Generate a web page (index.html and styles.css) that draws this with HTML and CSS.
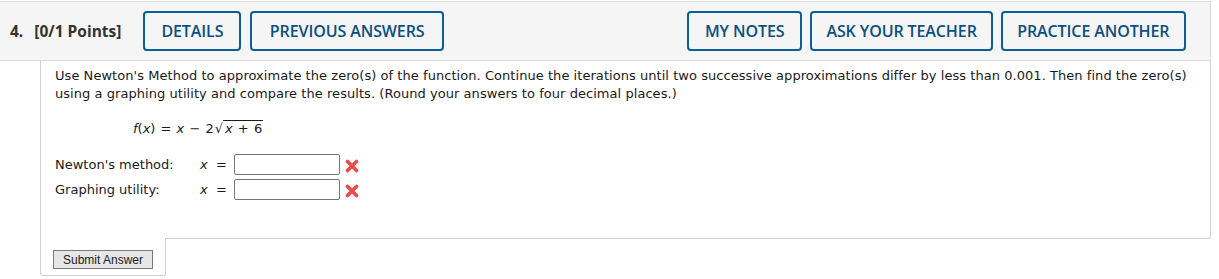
FILE: index.html
```html
<!DOCTYPE html>
<html>
<head>
<meta charset="utf-8">
<link rel="stylesheet" href="styles.css">
</head>
<body>
<div class="page">
  <div class="header">
    <div class="qnum"><span class="num">4.</span><span class="pts">[0/1 Points]</span></div>
    <div class="btns btns-left">
      <button class="hbtn btn-details">DETAILS</button>
      <button class="hbtn btn-prev">PREVIOUS ANSWERS</button>
    </div>
    <div class="spacer"></div>
    <div class="btns btns-right">
      <button class="hbtn btn-notes">MY NOTES</button>
      <button class="hbtn btn-ask">ASK YOUR TEACHER</button>
      <button class="hbtn btn-practice">PRACTICE ANOTHER</button>
    </div>
  </div>
  <div class="content">
    <p class="prompt">Use Newton's Method to approximate the zero(s) of the function. Continue the iterations until two successive approximations differ by less than 0.001. Then find the zero(s) using a graphing utility and compare the results. (Round your answers to four decimal places.)</p>
    <div class="formula"><i>f</i>(<i>x</i>) = <i>x</i> − 2<span class="rad">√</span><span class="radicand"><i>x</i> + 6</span></div>
    <div class="answers">
      <div class="row">
        <span class="label">Newton's method:</span>
        <span class="eq"><i>x</i> &nbsp;=</span>
        <input class="box" type="text">
        <svg class="wrong" width="14" height="14" viewBox="0 0 14 14"><path d="M2.5 2.5 L11.5 11.5 M11.5 2.5 L2.5 11.5" stroke="#ec4b4b" stroke-width="3.6" stroke-linecap="round"/></svg>
      </div>
      <div class="row">
        <span class="label">Graphing utility:</span>
        <span class="eq"><i>x</i> &nbsp;=</span>
        <input class="box" type="text">
        <svg class="wrong" width="14" height="14" viewBox="0 0 14 14"><path d="M2.5 2.5 L11.5 11.5 M11.5 2.5 L2.5 11.5" stroke="#ec4b4b" stroke-width="3.6" stroke-linecap="round"/></svg>
      </div>
    </div>
  </div>
  <div class="tab">
    <button class="submit">Submit Answer</button>
  </div>
</div>
</body>
</html>
```
FILE: styles.css
```css
html, body {
  margin: 0;
  padding: 0;
  background: #fff;
}
.page {
  width: 1211px;
  padding-top: 1px;
}
.header {
  display: flex;
  align-items: center;
  height: 58px;
  background: #f5f5f5;
  border-top: 1px solid #dcdcdc;
  border-bottom: 1px solid #dcdcdc;
  border-right: 1px solid #dcdcdc;
  box-sizing: content-box;
  padding-left: 10px;
  padding-right: 24px;
  font-family: "Open Sans", sans-serif;
}
.qnum {
  font-weight: 700;
  font-size: 15.5px;
  color: #333;
  margin-right: 22px;
  margin-top: -1px;
}
.num {
  margin-right: 11px;
}
.btns {
  display: flex;
}
.btns-left {
  gap: 9px;
}
.btns-right {
  gap: 8px;
}
.spacer {
  flex: 1;
}
.hbtn {
  height: 40px;
  margin-top: -1px;
  background: #f5f5f5;
  border: 2px solid #0b5f97;
  border-radius: 4px;
  color: #0a4f82;
  font-family: "Open Sans", sans-serif;
  font-weight: 600;
  font-size: 16px;
  letter-spacing: -0.1px;
  padding: 0 14.5px;
}
.btn-details {
  padding: 0 16px;
}
.btn-prev {
  padding: 0 17.5px;
}
.btn-notes {
  padding: 0 16px;
}
.btn-ask {
  padding: 0 14px;
}
.content {
  margin-left: 40px;
  border-left: 1px solid #cfcfcf;
  border-right: 1px solid #cfcfcf;
  border-bottom: 1px solid #cfcfcf;
  border-bottom-right-radius: 3px;
  height: 171px;
  padding: 6px 14px 0 14px;
  font-family: "DejaVu Sans", Verdana, sans-serif;
  font-size: 13px;
  color: #1a1a1a;
}
.prompt {
  margin: 0;
  line-height: 18px;
  letter-spacing: 0.05px;
}
.formula {
  margin-top: 17px;
  margin-left: 78px;
  line-height: 18px;
  word-spacing: 1px;
}
.rad {
  margin-left: 1px;
}
.radicand {
  border-top: 1px solid #1a1a1a;
  padding: 0 1px 0 2px;
}
.answers {
  margin-top: 16px;
  display: flex;
  flex-direction: column;
  gap: 4px;
}
.row {
  display: flex;
  align-items: center;
  height: 21px;
}
.label {
  width: 145px;
}
.eq {
  width: 34px;
}
.box {
  width: 106px;
  height: 21px;
  box-sizing: border-box;
  border: 1px solid #767676;
  border-radius: 2px;
  margin: 0;
  padding: 0;
}
.wrong {
  margin-left: 5px;
  margin-top: 3px;
}
.tab {
  margin-left: 40px;
  margin-top: -1px;
  width: 126px;
  height: 38px;
  background: #fff;
  border-left: 1px solid #cfcfcf;
  border-right: 1px solid #cfcfcf;
  border-bottom: 1px solid #cfcfcf;
  border-bottom-left-radius: 3px;
  border-bottom-right-radius: 3px;
  box-sizing: border-box;
  padding-top: 12px;
  padding-left: 12px;
}
.submit {
  display: block;
  width: 100px;
  height: 19px;
  padding: 0;
  font-family: "Liberation Sans", Arial, sans-serif;
  font-size: 12px;
  color: #222;
  background: #e6e6e6;
  border: 1px solid #7a7a7a;
  border-radius: 0;
}
```
